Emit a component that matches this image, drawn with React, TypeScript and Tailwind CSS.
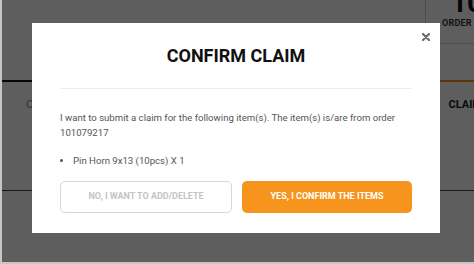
export default function App() {
  return (
    <div className="w-[474px] h-[264px] bg-[#c6c6c6] pl-[2px] pb-[2px] overflow-hidden" style={{ fontFamily: "Roboto, 'Liberation Sans', sans-serif" }}>
      <div className="relative w-full h-full bg-white overflow-hidden">
        {/* page behind the dialog */}
        <div className="flex flex-col h-full">
          <div className="flex h-[44px]">
            <div className="flex-1" />
            <div className="w-[49px] border-l border-b border-[#d0d0d0] pl-[16px] relative">
              <div className="absolute -top-[11px] left-[25px] text-[28px] font-bold leading-none text-[#111]">10</div>
              <div className="mt-[17px] text-[9px] font-bold tracking-wide text-[#333]">ORDER</div>
            </div>
          </div>
          <div className="flex h-[38px]">
            <div className="flex-1 border-b-2 border-[#111]" />
            <div className="flex-1 border-b-2 border-[#f7941d]" />
          </div>
          <div className="flex justify-between h-[109px] pt-[15px] border-b border-[#444] text-[11px]">
            <span className="ml-[24px] text-[#888]">C</span>
            <span className="mr-[-8px] font-bold text-[#222]">CLAIM</span>
          </div>
        </div>

        {/* overlay */}
        <div className="absolute inset-0 bg-black/[.63] pt-[23px] pl-[30px]">
          <div className="relative w-[408px] h-[210px] bg-white px-[28px] pt-[22px] pb-[20px]">
            <button className="absolute top-[9px] right-[9px] w-[10px] h-[10px] flex items-center justify-center">
              <svg width="8" height="8" viewBox="0 0 8 8">
                <path d="M1 1 L7 7 M7 1 L1 7" stroke="#6b6b6b" strokeWidth="2.2" strokeLinecap="round" />
              </svg>
            </button>
            <h2 className="text-center text-[18px] leading-[21px] font-bold text-[#111]">CONFIRM CLAIM</h2>
            <div className="mt-[22px] border-t border-[#ececec]" />
            <p className="mt-[21px] text-[9.6px] leading-[15px] text-[#555]">
              I want to submit a claim for the following item(s). The item(s) is/are from order 101079217
            </p>
            <ul className="mt-[13px] list-disc pl-[13px] text-[9.6px] leading-[15px] text-[#555]">
              <li>Pin Horn 9x13 (10pcs) X 1</li>
            </ul>
            <div className="mt-[13px] flex gap-[10px]">
              <button className="flex-1 h-[32px] rounded-[5px] border border-[#d8d8d8] text-[9px] font-bold text-[#c4c4c4]">
                NO, I WANT TO ADD/DELETE
              </button>
              <button className="flex-1 h-[32px] rounded-[5px] bg-[#f7941d] text-[9px] font-bold text-white">
                YES, I CONFIRM THE ITEMS
              </button>
            </div>
          </div>
        </div>
      </div>
    </div>
  );
}
